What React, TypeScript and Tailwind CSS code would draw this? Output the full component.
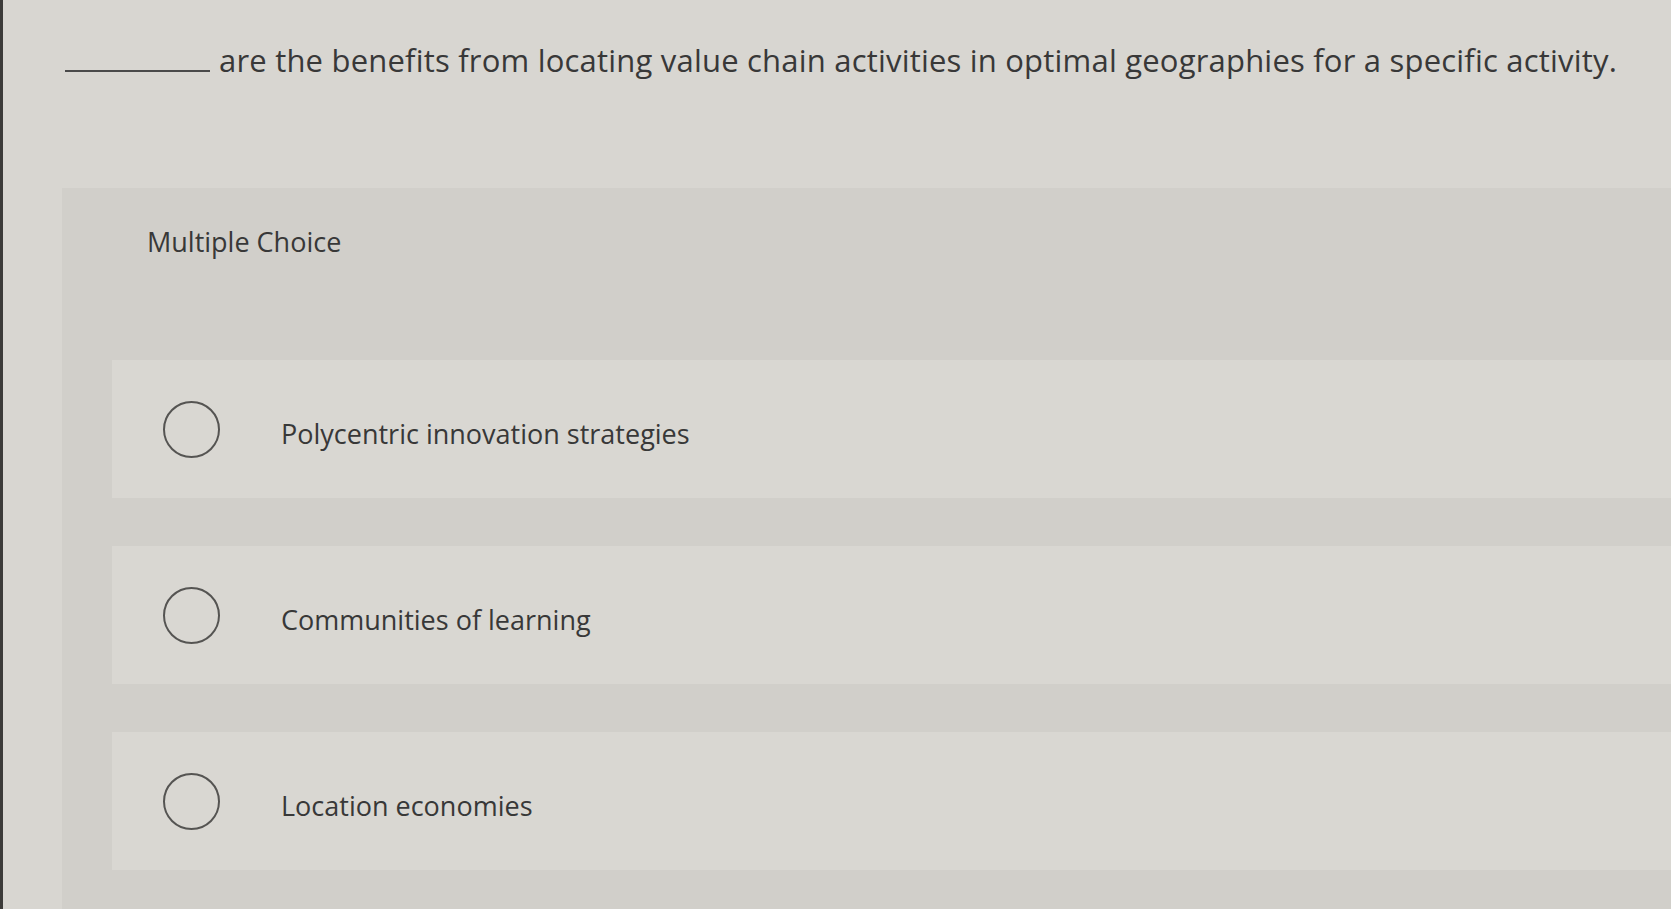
const options = [
  "Polycentric innovation strategies",
  "Communities of learning",
  "Location economies",
];

export default function App() {
  return (
    <div
      className="min-h-screen w-full bg-[#d8d6d1] border-l-[3px] border-[#3c3b39] text-[#383838] overflow-hidden"
      style={{ fontFamily: '"Open Sans", "Liberation Sans", sans-serif' }}
    >
      {/* question stem */}
      <div className="pt-[40px] pl-[62px] text-[31px] leading-[40px] tracking-[0.2px] whitespace-nowrap">
        <span className="inline-block w-[145px] border-b-2 border-[#4a4a4a] mr-[9px] align-baseline" />
        are the benefits from locating value chain activities in optimal geographies for a specific activity.
      </div>

      {/* answer panel */}
      <div className="mt-[108px] ml-[59px] bg-[#d1cfca] min-h-[721px] pl-[50px] pb-10">
        <div className="pt-[37px] pl-[35px] text-[27px] leading-[34px]">Multiple Choice</div>

        <div className="mt-[101px] flex flex-col gap-[48px]">
          {options.map((label) => (
            <label key={label} className="flex items-center h-[138px] bg-[#d9d7d2] cursor-pointer">
              <span className="ml-[51px] w-[57px] h-[57px] rounded-full border-2 border-[#555452] shrink-0" />
              <span className="ml-[61px] mt-[10px] text-[27px] leading-[34px]">{label}</span>
            </label>
          ))}
        </div>
      </div>
    </div>
  );
}
